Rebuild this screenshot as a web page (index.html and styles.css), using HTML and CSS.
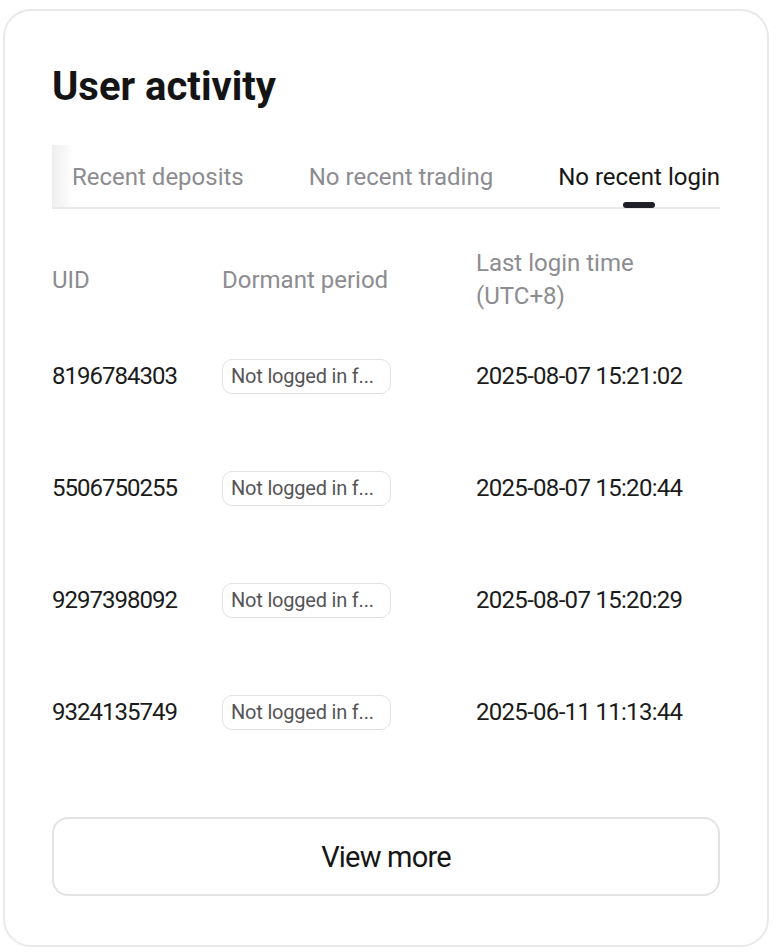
FILE: index.html
```html
<!DOCTYPE html>
<html lang="en">
<head>
<meta charset="utf-8">
<title>User activity</title>
<link rel="stylesheet" href="styles.css">
</head>
<body>
<section class="card">
  <h1 class="title">User activity</h1>
  <nav class="tabs">
    <div class="tab">Recent deposits</div>
    <div class="tab">No recent trading</div>
    <div class="tab tab-active">No recent login</div>
  </nav>
  <div class="table">
    <div class="thead">
      <div class="th">UID</div>
      <div class="th">Dormant period</div>
      <div class="th th-wrap">Last login time (UTC+8)</div>
    </div>
    <div class="row">
      <div class="uid">8196784303</div>
      <div><span class="tag">Not logged in f...</span></div>
      <div class="time">2025-08-07 15:21:02</div>
    </div>
    <div class="row">
      <div class="uid">5506750255</div>
      <div><span class="tag">Not logged in f...</span></div>
      <div class="time">2025-08-07 15:20:44</div>
    </div>
    <div class="row">
      <div class="uid">9297398092</div>
      <div><span class="tag">Not logged in f...</span></div>
      <div class="time">2025-08-07 15:20:29</div>
    </div>
    <div class="row">
      <div class="uid">9324135749</div>
      <div><span class="tag">Not logged in f...</span></div>
      <div class="time">2025-06-11 11:13:44</div>
    </div>
  </div>
  <button class="more" type="button">View more</button>
</section>
</body>
</html>
```
FILE: styles.css
```css
* { box-sizing: border-box; }

html, body { background: #ffffff; }

body {
  margin: 0;
  padding: 9px 0 0 3px;
  font-family: Roboto, "Liberation Sans", Arial, sans-serif;
  color: #1b1b1b;
}

.card {
  width: 766px;
  border: 2px solid #e9e9e9;
  border-radius: 28px;
  padding: 51px 47px 49px 47px;
  background: #ffffff;
}

.title {
  margin: 0;
  font-size: 40px;
  line-height: 50px;
  font-weight: 700;
  color: #141414;
}

.tabs {
  position: relative;
  margin-top: 33px;
  height: 64px;
  display: flex;
  justify-content: flex-end;
  gap: 65px;
  border-bottom: 2px solid #e9e9e9;
}

.tabs::before {
  content: "";
  position: absolute;
  left: 0;
  top: 0;
  bottom: 0;
  width: 22px;
  background: linear-gradient(to right, #eeeeee, rgba(255,255,255,0));
}

.tab {
  position: relative;
  font-size: 24px;
  line-height: 64px;
  color: #8c8c91;
  white-space: nowrap;
}

.tab-active { color: #161616; }

.tab-active::after {
  content: "";
  position: absolute;
  left: 50%;
  bottom: -1px;
  width: 32px;
  height: 6px;
  margin-left: -16px;
  border-radius: 3px;
  background: #1e2026;
}

.thead,
.row {
  display: grid;
  grid-template-columns: 170px 254px 1fr;
  align-items: center;
}

.thead {
  padding: 38px 0 7px;
}

.th {
  font-size: 24px;
  line-height: 33px;
  color: #8c8c91;
}

.th-wrap { max-width: 180px; }

.row { height: 112px; }

.uid {
  font-size: 24px;
  letter-spacing: -1px;
  color: #1b1b1b;
}

.time {
  font-size: 24px;
  letter-spacing: -0.7px;
  color: #1b1b1b;
}

.tag {
  display: block;
  width: 169px;
  height: 35px;
  padding: 0 8px;
  border: 1.5px solid #e2e2e2;
  border-radius: 10px;
  font-size: 20px;
  line-height: 32px;
  letter-spacing: -0.2px;
  color: #555558;
  white-space: nowrap;
}

.more {
  display: block;
  width: 100%;
  height: 79px;
  margin-top: 49px;
  border: 2px solid #e3e3e3;
  border-radius: 16px;
  background: #ffffff;
  font-family: Roboto, "Liberation Sans", Arial, sans-serif;
  font-size: 29px;
  letter-spacing: -0.8px;
  color: #161616;
  cursor: pointer;
}
```
